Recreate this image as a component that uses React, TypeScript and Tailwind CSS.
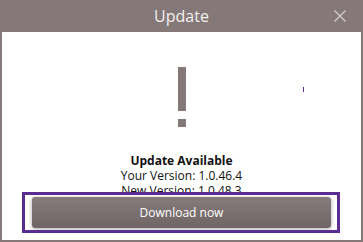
export default function App() {
  return (
    <div
      className="flex h-[242px] w-[363px] flex-col bg-[#857878]"
      style={{ fontFamily: '"Open Sans", "Noto Sans", sans-serif' }}
    >
      {/* title bar */}
      <div className="relative flex h-8 shrink-0 items-center justify-center">
        <span className="text-[16px] leading-none text-[#f4f0f0]">Update</span>
        <svg
          className="absolute left-[334px] top-[10px]"
          width="12"
          height="12"
          viewBox="0 0 12 12"
        >
          <path d="M0.5 0.5 L11.5 11.5 M11.5 0.5 L0.5 11.5" stroke="#d6d0d0" strokeWidth="1.2" />
        </svg>
      </div>

      {/* body */}
      <div className="relative mx-[2px] mb-[2px] flex flex-1 flex-col items-center bg-white">
        <div className="mt-[35px] flex flex-col items-center gap-2">
          <div className="h-[44px] w-2 bg-[#857878]" />
          <div className="h-2 w-2 bg-[#857878]" />
        </div>

        <div className="mt-[26px] flex flex-col items-center text-[12px] leading-[15px] text-[#111]">
          <span className="font-bold">Update Available</span>
          <span>Your Version: 1.0.46.4</span>
          <span>New Version: 1.0.48.3</span>
        </div>

        <button className="mx-[30px] mt-[-1px] flex h-[31px] w-[299px] items-center justify-center rounded-[3px] bg-gradient-to-b from-[#877c7c] to-[#6f6565] text-[12px] text-white shadow-[0_1px_4px_rgba(0,0,0,0.35)]">
          Download now
        </button>

        {/* highlight overlay */}
        <div className="absolute left-[20px] top-[160px] h-[41px] w-[318px] border-[3px] border-[#5c2d91]" />
        {/* caret mark */}
        <div className="absolute left-[301px] top-[55px] h-[5px] w-px bg-[#5c2d91]" />
      </div>
    </div>
  );
}
